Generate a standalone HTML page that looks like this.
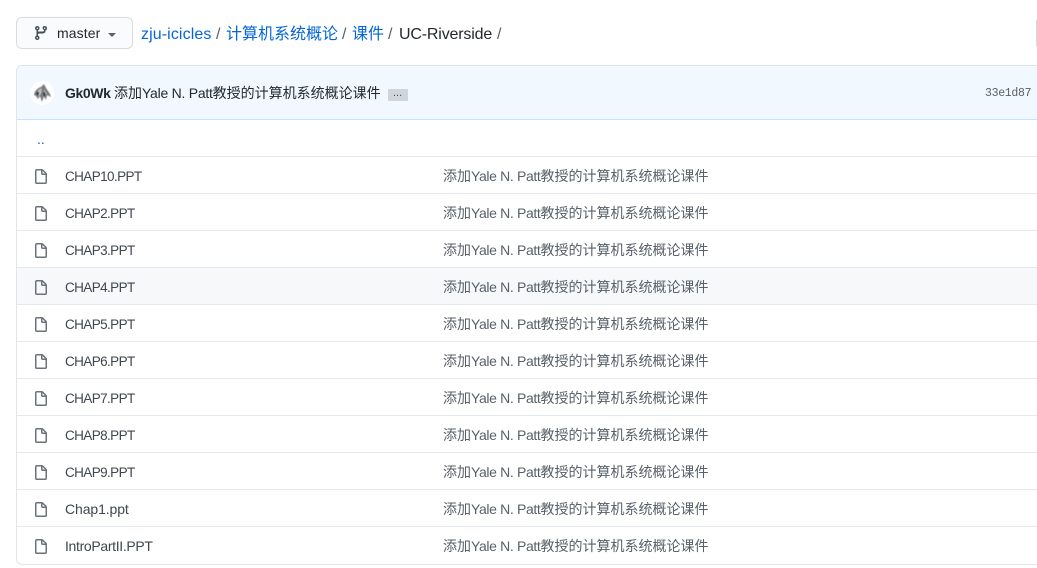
<!DOCTYPE html>
<html lang="zh"><head><meta charset="utf-8"><style>
html,body{margin:0;padding:0;background:#fff;width:1037px;height:568px;overflow:hidden}
body{font-family:"Liberation Sans","Noto Sans CJK SC",sans-serif;font-size:14px;color:#24292e;position:relative}
.a{position:absolute;white-space:nowrap}
.btn{left:16px;top:17px;width:115px;height:30px;border:1px solid #d8dade;border-radius:6px;background:#fafbfc}
.bl{color:#0366d6}
.crumb{font-size:16px;top:24px;line-height:21px}
.box{left:16px;top:65px;width:1040px;height:498px;border:1px solid #e1e4e8;border-radius:6px;overflow:hidden}
.hd{position:absolute;left:0;top:0;right:0;height:53px;background:#f1f8ff;border-bottom:1px solid #c8e1ff}
.line{left:17px;width:1020px;height:1px;background:#e6e9ed}
.name,.msg{line-height:20px}
.name{left:65px;color:#3f464e}
.c{font-size:13.5px;letter-spacing:-.6px;line-height:22px}
.msg{left:443px;color:#586069}
.l{letter-spacing:-.35px}
</style></head><body>
<div class="a btn"></div>
<svg class="a" style="left:33px;top:25px" width="16" height="16" viewBox="0 0 16 16" fill="#444d56"><path fill-rule="evenodd" d="M11.75 2.5a.75.75 0 1 0 0 1.5.75.75 0 0 0 0-1.5zm-2.25.75a2.25 2.25 0 1 1 3 2.12V6A2.5 2.5 0 0 1 10 8.5H6a1 1 0 0 0-1 1v1.13a2.25 2.25 0 1 1-1.5 0V5.37a2.25 2.25 0 1 1 1.5 0v1.4c.3-.17.64-.27 1-.27h4a1 1 0 0 0 1-1v-.63A2.25 2.25 0 0 1 9.5 3.25zM4.25 12a.75.75 0 1 0 0 1.5.75.75 0 0 0 0-1.5zM3.5 3.25a.75.75 0 1 1 1.5 0 .75.75 0 0 1-1.5 0z"/></svg>
<div class="a" style="left:57px;top:24px;line-height:18px;font-size:14px;letter-spacing:.1px;color:#24292e">master</div>
<div class="a" style="left:108px;top:33px;width:0;height:0;border:4px solid transparent;border-top-color:#586069;border-bottom:0"></div>

<div class="a crumb bl" style="left:141px;letter-spacing:.1px">zju-icicles</div>
<div class="a crumb" style="left:216px;color:#586069">/</div>
<div class="a crumb bl" style="left:226px">计算机系统概论</div>
<div class="a crumb" style="left:342px;color:#586069">/</div>
<div class="a crumb bl" style="left:352px">课件</div>
<div class="a crumb" style="left:388px;color:#586069">/</div>
<div class="a crumb" style="left:399px;letter-spacing:-.17px">UC-Riverside</div>
<div class="a crumb" style="left:497px;color:#586069">/</div>
<div class="a" style="left:1036px;top:20px;width:1px;height:26px;background:#d5d8dc"></div>

<div class="a box"><div class="hd"></div></div>
<div class="a" style="left:17px;top:268px;width:1020px;height:36px;background:#f6f8fa"></div>

<svg class="a" style="left:30px;top:81px" width="24" height="24" viewBox="0 0 24 24">
<circle cx="12" cy="12" r="12" fill="#fff"/>
<g style="filter:blur(.6px)">
<path d="M4 14C5 9 8 7 11 6L14 3L16 7L20 13L21 16L17 14L16 19L14 15L12 21L10 15L8 18L6 15Z" fill="#77797b"/>
<path d="M8 9L12 7L11 13L8 16ZM14 8L17 13L14 13Z" fill="#bdbfc0"/>
<path d="M6 12L9 11L8 15ZM13 12L15 11L15 17Z" fill="#2a2d2f"/>
</g>
</svg>
<div class="a" style="left:65px;top:83px;line-height:20px;font-weight:bold;letter-spacing:-.4px;color:#24292e">Gk0Wk</div>
<div class="a" style="left:114px;top:83px;line-height:20px;color:#24292e">添加<span style="letter-spacing:-.25px">Yale N. Patt</span>教授的计算机系统概论课件</div>
<div class="a" style="left:388px;top:89px;width:20px;height:12px;background:#d1d5da;border-radius:1px"></div>
<div class="a" style="left:393px;top:86px;font-size:11px;line-height:14px;color:#444d56">...</div>
<div class="a" style="left:985px;top:86px;font-family:'Liberation Mono',monospace;font-size:11.5px;letter-spacing:-.3px;line-height:16px;color:#586069">33e1d87</div>

<div class="a bl" style="left:37px;top:129px;line-height:20px">..</div>

<div class="a line" style="top:156px"></div>
<div class="a line" style="top:193px"></div>
<div class="a line" style="top:230px"></div>
<div class="a line" style="top:267px"></div>
<div class="a line" style="top:304px"></div>
<div class="a line" style="top:341px"></div>
<div class="a line" style="top:378px"></div>
<div class="a line" style="top:415px"></div>
<div class="a line" style="top:452px"></div>
<div class="a line" style="top:489px"></div>
<div class="a line" style="top:526px"></div>

<svg width="0" height="0" style="position:absolute"><defs><path id="f" fill-rule="evenodd" d="M3.75 1.5a.25.25 0 0 0-.25.25v11.5c0 .14.11.25.25.25h8.5a.25.25 0 0 0 .25-.25V6H9.75A1.75 1.75 0 0 1 8 4.25V1.5H3.75zm5.75.56v2.19c0 .14.11.25.25.25h2.19L9.5 2.06zM2 1.75C2 .78 2.78 0 3.75 0h5.09c.46 0 .9.18 1.23.51l3.42 3.42c.33.33.51.77.51 1.23v8.09A1.75 1.75 0 0 1 12.25 15h-8.5A1.75 1.75 0 0 1 2 13.25V1.75z"/></defs></svg>

<svg class="a" style="left:33px;top:169px" width="16" height="16" fill="#6a737d"><use href="#f"/></svg>
<div class="a name c" style="top:166px">CHAP10.PPT</div><div class="a msg" style="top:166px">添加<span class="l">Yale N. Patt</span>教授的计算机系统概论课件</div>
<svg class="a" style="left:33px;top:206px" width="16" height="16" fill="#6a737d"><use href="#f"/></svg>
<div class="a name c" style="top:203px">CHAP2.PPT</div><div class="a msg" style="top:203px">添加<span class="l">Yale N. Patt</span>教授的计算机系统概论课件</div>
<svg class="a" style="left:33px;top:243px" width="16" height="16" fill="#6a737d"><use href="#f"/></svg>
<div class="a name c" style="top:240px">CHAP3.PPT</div><div class="a msg" style="top:240px">添加<span class="l">Yale N. Patt</span>教授的计算机系统概论课件</div>
<svg class="a" style="left:33px;top:280px" width="16" height="16" fill="#6a737d"><use href="#f"/></svg>
<div class="a name c" style="top:277px">CHAP4.PPT</div><div class="a msg" style="top:277px">添加<span class="l">Yale N. Patt</span>教授的计算机系统概论课件</div>
<svg class="a" style="left:33px;top:317px" width="16" height="16" fill="#6a737d"><use href="#f"/></svg>
<div class="a name c" style="top:314px">CHAP5.PPT</div><div class="a msg" style="top:314px">添加<span class="l">Yale N. Patt</span>教授的计算机系统概论课件</div>
<svg class="a" style="left:33px;top:354px" width="16" height="16" fill="#6a737d"><use href="#f"/></svg>
<div class="a name c" style="top:351px">CHAP6.PPT</div><div class="a msg" style="top:351px">添加<span class="l">Yale N. Patt</span>教授的计算机系统概论课件</div>
<svg class="a" style="left:33px;top:391px" width="16" height="16" fill="#6a737d"><use href="#f"/></svg>
<div class="a name c" style="top:388px">CHAP7.PPT</div><div class="a msg" style="top:388px">添加<span class="l">Yale N. Patt</span>教授的计算机系统概论课件</div>
<svg class="a" style="left:33px;top:428px" width="16" height="16" fill="#6a737d"><use href="#f"/></svg>
<div class="a name c" style="top:425px">CHAP8.PPT</div><div class="a msg" style="top:425px">添加<span class="l">Yale N. Patt</span>教授的计算机系统概论课件</div>
<svg class="a" style="left:33px;top:465px" width="16" height="16" fill="#6a737d"><use href="#f"/></svg>
<div class="a name c" style="top:462px">CHAP9.PPT</div><div class="a msg" style="top:462px">添加<span class="l">Yale N. Patt</span>教授的计算机系统概论课件</div>
<svg class="a" style="left:33px;top:502px" width="16" height="16" fill="#6a737d"><use href="#f"/></svg>
<div class="a name" style="top:499px;letter-spacing:-.1px">Chap1.ppt</div><div class="a msg" style="top:499px">添加<span class="l">Yale N. Patt</span>教授的计算机系统概论课件</div>
<svg class="a" style="left:33px;top:539px" width="16" height="16" fill="#6a737d"><use href="#f"/></svg>
<div class="a name" style="top:536px;letter-spacing:-.33px">IntroPartII.PPT</div><div class="a msg" style="top:536px">添加<span class="l">Yale N. Patt</span>教授的计算机系统概论课件</div>
</body></html>
